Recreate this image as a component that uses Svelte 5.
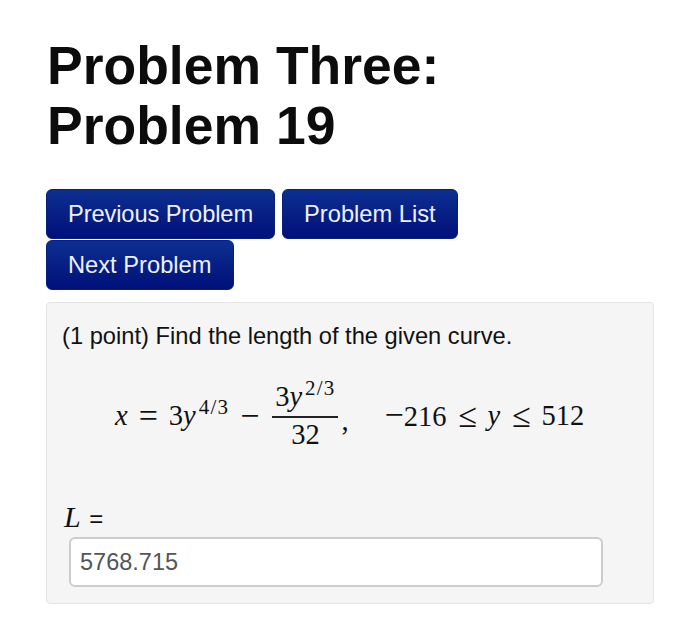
<script>
  let answer = "5768.715";
  const buttons = ["Previous Problem", "Problem List", "Next Problem"];
</script>

<main class="page">
  <h1>Problem Three:<br />Problem 19</h1>

  <div class="buttons">
    {#each buttons as label}
      <button type="button">{label}</button>
    {/each}
  </div>

  <section class="well">
    <p class="intro">(1 point) Find the length of the given curve.</p>

    <div class="math">
      <i>x</i><span class="rel first">=</span><span>3<i class="y">y</i><sup>4/3</sup></span>
      <span class="minus">−</span>
      <span class="frac">
        <span class="num">3<i class="y">y</i><sup>2/3</sup></span>
        <span class="den">32</span>
      </span>
      <span class="comma">,</span>
      <span class="range"><span class="neg">−</span>216</span><span class="rel">≤</span><i>y</i><span class="rel">≤</span><span>512</span>
    </div>

    <div class="answer">
      <label for="ans"><i>L</i> <span>=</span></label>
      <input id="ans" type="text" bind:value={answer} />
    </div>
  </section>
</main>

<style>
  :global(body) {
    background: #fff;
    font-family: "Liberation Sans", Arial, sans-serif;
    color: #111;
  }

  .page {
    width: 608px;
    padding: 36px 0 32px 46px;
  }

  h1 {
    margin: 0 0 33px 1px;
    font-size: 53.5px;
    line-height: 60px;
    font-weight: 700;
    color: #0c0c0c;
  }

  .buttons {
    display: flex;
    flex-wrap: wrap;
    column-gap: 7px;
    row-gap: 1px;
    width: 430px;
  }

  button {
    height: 50px;
    padding: 2px 21px 0;
    font: 23.7px/1 "Liberation Sans", Arial, sans-serif;
    color: #eef1fa;
    background: linear-gradient(#0d2f90, #00107a);
    border: 1px solid #0a1f78;
    border-radius: 6px;
  }

  button:first-child {
    letter-spacing: -0.12px;
  }

  .well {
    box-sizing: border-box;
    height: 302px;
    margin-top: 12px;
    padding: 19px 15px 0;
    background: #f5f5f5;
    border: 1px solid #e4e4e4;
    border-radius: 4px;
  }

  .intro {
    margin: 0;
    font-size: 23.7px;
    line-height: 28px;
  }

  .math {
    display: flex;
    align-items: center;
    height: 90px;
    margin: 21px 0 0 53px;
    font: 28.5px/1 "Liberation Serif", "Times New Roman", serif;
    white-space: nowrap;
  }

  .rel {
    margin: 0 10.5px 0 12px;
    font-size: 34px;
    line-height: 28px;
  }

  .rel.first {
    margin: 0 11px;
  }

  .y {
    margin-right: 3px;
  }

  sup {
    font-size: 21px;
    line-height: 0;
    letter-spacing: 1.2px;
    vertical-align: 11px;
  }

  .minus {
    margin: 0 13px 0 11px;
    font-size: 34px;
    line-height: 28px;
  }

  .frac {
    display: inline-flex;
    flex-direction: column;
    align-items: center;
    width: 66px;
  }

  .num {
    padding-bottom: 4px;
    width: 100%;
    text-align: center;
    border-bottom: 2px solid #222;
  }

  .den {
    padding-top: 3px;
  }

  .comma {
    margin: 10px 36px 0 3px;
  }

  .neg {
    font-size: 34px;
    line-height: 28px;
  }

  .answer {
    margin-top: 39px;
  }

  label {
    display: block;
    font-size: 20px;
    line-height: 34px;
  }

  label i {
    font: italic 30px/34px "Liberation Serif", "Times New Roman", serif;
    margin-left: 2px;
  }

  label span {
    font-size: 24px;
    margin-left: 3px;
  }

  input {
    display: block;
    box-sizing: border-box;
    width: 534px;
    height: 50px;
    margin: 0 0 0 7px;
    padding: 0 9px;
    font: 23.5px "Liberation Sans", Arial, sans-serif;
    color: #555;
    background: #fff;
    border: 2px solid #ccc;
    border-radius: 6px;
  }
</style>
